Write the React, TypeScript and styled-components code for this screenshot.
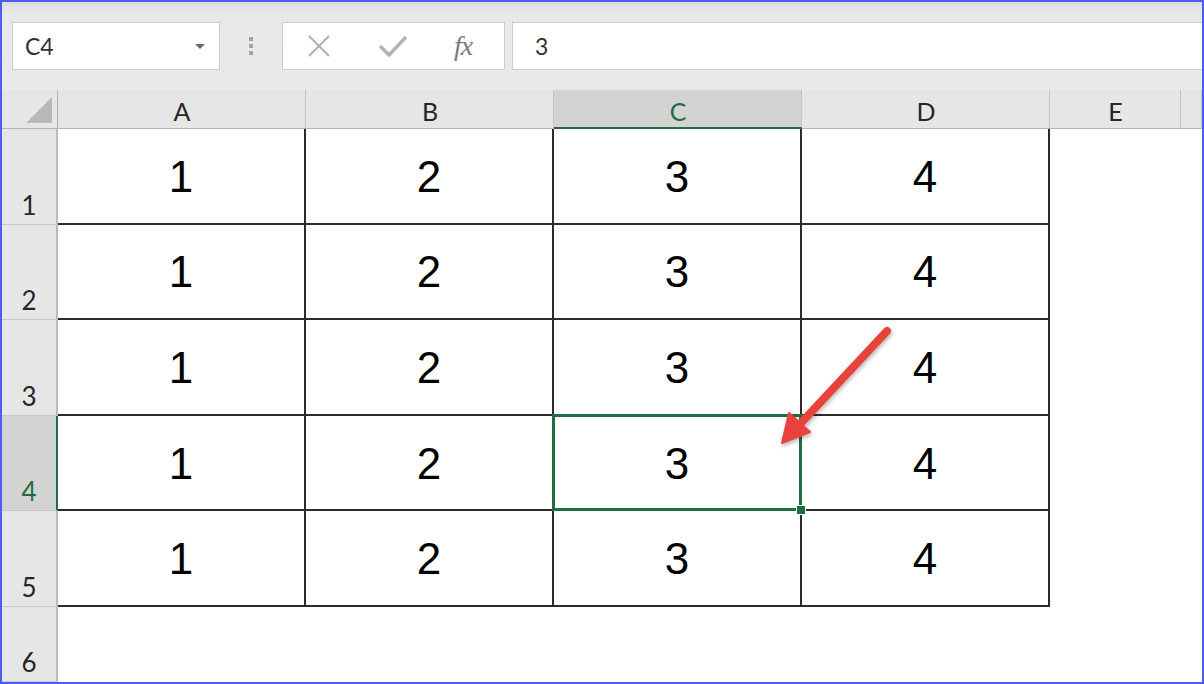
import React from 'react';
import styled, { createGlobalStyle, css } from 'styled-components';

const GlobalStyle = createGlobalStyle`
	html, body {
		margin: 0;
		padding: 0;
		background: #ffffff;
	}
	* {
		box-sizing: border-box;
	}
`;

const GREEN = '#1f6e42';
const UI_FONT = `Lato, "Open Sans", "Liberation Sans", sans-serif`;

const Window = styled.div`
	position: relative;
	width: 1204px;
	height: 684px;
	border: 2px solid #4b5ef2;
	display: flex;
	flex-direction: column;
	overflow: hidden;
	background: #ffffff;
`;

const Toolbar = styled.div`
	height: 88px;
	flex: none;
	display: flex;
	align-items: flex-start;
	padding: 20px 0 0 10px;
	background: linear-gradient(#dedede 0px, #e8e8e8 14px, #e9e9e9 100%);
	font-family: ${UI_FONT};
`;

const NameBox = styled.div`
	width: 208px;
	height: 48px;
	display: flex;
	align-items: center;
	justify-content: space-between;
	padding: 0 14px 0 12px;
	background: #ffffff;
	border: 1px solid #cdcdcd;
	font-size: 23px;
	color: #333333;
`;

const DropArrow = styled.span`
	width: 0;
	height: 0;
	border-left: 5px solid transparent;
	border-right: 5px solid transparent;
	border-top: 5px solid #666666;
`;

const Grip = styled.div`
	width: 62px;
	height: 48px;
	display: flex;
	flex-direction: column;
	align-items: center;
	justify-content: center;
	gap: 3px;
`;

const GripDot = styled.span`
	width: 4px;
	height: 4px;
	background: #a3a3a3;
`;

const FormulaButtons = styled.div`
	width: 223px;
	height: 48px;
	display: flex;
	align-items: center;
	gap: 46px;
	padding-left: 23px;
	background: #ffffff;
	border: 1px solid #cdcdcd;
`;

const FxLabel = styled.span`
	font-family: "Liberation Serif", "DejaVu Serif", serif;
	font-style: italic;
	font-size: 28px;
	color: #7a7a7a;
	letter-spacing: -1px;
`;

const FormulaInput = styled.div`
	flex: 1;
	height: 48px;
	margin-left: 7px;
	display: flex;
	align-items: center;
	padding-left: 22px;
	background: #ffffff;
	border: 1px solid #cdcdcd;
	border-right: none;
	font-size: 23px;
	color: #333333;
`;

const Sheet = styled.div`
	flex: 1;
	display: grid;
	grid-template-columns: 56px repeat(4, 248px) 131px 1fr;
	grid-template-rows: 39px repeat(5, 95.6px) 1fr;
`;

const Corner = styled.div`
	position: relative;
	background: #e6e6e6;
	border-right: 1px solid #b4b4b4;
	border-bottom: 1px solid #b4b4b4;
	&::after {
		content: '';
		position: absolute;
		right: 5px;
		bottom: 5px;
		width: 26px;
		height: 26px;
		background: #b9b9b9;
		clip-path: polygon(100% 0, 100% 100%, 0 100%);
	}
`;

const ColHeader = styled.div<{ $active?: boolean }>`
	display: flex;
	align-items: center;
	justify-content: center;
	padding-top: 4px;
	background: #e6e6e6;
	border-bottom: 1px solid #b4b4b4;
	box-shadow: inset -1px 0 0 #c4c4c4;
	font-family: ${UI_FONT};
	font-size: 25px;
	color: #262626;
	${p =>
		p.$active &&
		css`
			background: #d3d3d3;
			border-bottom: 2px solid ${GREEN};
			color: ${GREEN};
		`}
`;

const RowHeader = styled.div<{ $active?: boolean }>`
	display: flex;
	align-items: flex-end;
	justify-content: center;
	padding-bottom: 3px;
	background: #e6e6e6;
	border-right: 2px solid #bcbcbc;
	border-bottom: 1px solid #c8c8c8;
	font-family: ${UI_FONT};
	font-size: 26px;
	color: #262626;
	${p =>
		p.$active &&
		css`
			background: #d3d3d3;
			border-right: 2px solid ${GREEN};
			color: ${GREEN};
		`}
`;

const DataCell = styled.div<{ $selected?: boolean }>`
	position: relative;
	display: flex;
	align-items: center;
	justify-content: center;
	padding-top: 2px;
	border-right: 2px solid #2b2b2b;
	border-bottom: 2px solid #2b2b2b;
	font-family: "Liberation Sans", Arial, sans-serif;
	font-size: 44px;
	color: #000000;
	${p =>
		p.$selected &&
		css`
			&::after {
				content: '';
				position: absolute;
				top: -2px;
				left: -2px;
				right: -2px;
				bottom: -2px;
				border: 3px solid ${GREEN};
				pointer-events: none;
			}
		`}
`;

const FillHandle = styled.span`
	position: absolute;
	right: -6px;
	bottom: -6px;
	width: 10px;
	height: 10px;
	background: ${GREEN};
	border: 1px solid #ffffff;
	z-index: 2;
`;

const EmptyCell = styled.div``;

const ArrowLayer = styled.svg`
	position: absolute;
	top: -2px;
	left: -2px;
	pointer-events: none;
`;

const columns = ['A', 'B', 'C', 'D', 'E', ''];
const rows = [1, 2, 3, 4, 5];
const selected = { row: 4, col: 2 };

const CancelIcon = () => (
	<svg width="26" height="26" viewBox="0 0 26 26">
		<path d="M3 3 L23 23 M23 3 L3 23" stroke="#b3b3b3" strokeWidth="2.2" fill="none" />
	</svg>
);

const EnterIcon = () => (
	<svg width="30" height="26" viewBox="0 0 30 26">
		<path d="M2 13 L11 22 L28 4" stroke="#b3b3b3" strokeWidth="3.4" fill="none" strokeLinejoin="miter" />
	</svg>
);

export default function App() {
	return (
		<>
			<GlobalStyle />
			<Window>
				<Toolbar>
					<NameBox>
						<span>C4</span>
						<DropArrow />
					</NameBox>
					<Grip>
						<GripDot />
						<GripDot />
						<GripDot />
					</Grip>
					<FormulaButtons>
						<CancelIcon />
						<EnterIcon />
						<FxLabel>fx</FxLabel>
					</FormulaButtons>
					<FormulaInput>3</FormulaInput>
				</Toolbar>

				<Sheet>
					<Corner />
					{columns.map((c, i) => (
						<ColHeader key={c || 'blank'} $active={i === selected.col}>
							{c}
						</ColHeader>
					))}

					{rows.map(r => (
						<React.Fragment key={r}>
							<RowHeader $active={r === selected.row}>{r}</RowHeader>
							{[1, 2, 3, 4].map((v, ci) => {
								const isSel = r === selected.row && ci === selected.col;
								return (
									<DataCell key={ci} $selected={isSel}>
										{v}
										{isSel && <FillHandle />}
									</DataCell>
								);
							})}
							<EmptyCell />
							<EmptyCell />
						</React.Fragment>
					))}

					<RowHeader>6</RowHeader>
					{columns.map((c, i) => (
						<EmptyCell key={i} />
					))}
				</Sheet>

				<ArrowLayer width="1204" height="684" viewBox="0 0 1204 684">
					<defs>
						<filter id="arrowShadow" x="-20%" y="-20%" width="140%" height="140%">
							<feDropShadow dx="1" dy="2" stdDeviation="2" floodColor="#000" floodOpacity="0.3" />
						</filter>
					</defs>
					<g filter="url(#arrowShadow)" fill="#e8433d" stroke="#e8433d">
						<line x1="887" y1="331" x2="800" y2="424" strokeWidth="8" strokeLinecap="round" />
						<polygon points="782,443 789,413 810,432" strokeWidth="2" strokeLinejoin="round" />
					</g>
				</ArrowLayer>
			</Window>
		</>
	);
}
